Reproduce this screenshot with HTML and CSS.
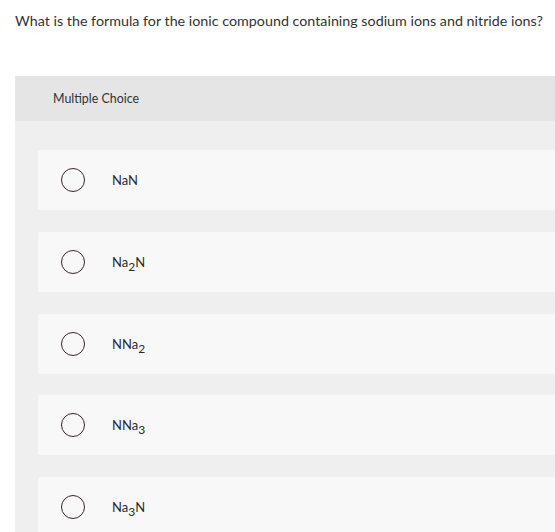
FILE: index.html
```html
<!DOCTYPE html>
<html>
<head>
<meta charset="utf-8">
<link rel="stylesheet" href="styles.css">
</head>
<body>
<div class="question">What is the formula for the ionic compound containing sodium ions and nitride ions?</div>
<div class="panel">
  <div class="panel-head">Multiple Choice</div>
  <div class="options">
    <div class="option"><span class="radio"></span><span class="label">NaN</span></div>
    <div class="option"><span class="radio"></span><span class="label">Na<sub>2</sub>N</span></div>
    <div class="option"><span class="radio"></span><span class="label">NNa<sub>2</sub></span></div>
    <div class="option"><span class="radio"></span><span class="label">NNa<sub>3</sub></span></div>
    <div class="option"><span class="radio"></span><span class="label">Na<sub>3</sub>N</span></div>
  </div>
</div>
</body>
</html>
```
FILE: styles.css
```css
html, body {
  margin: 0;
  padding: 0;
  background: #ffffff;
  font-family: Lato, "Liberation Sans", sans-serif;
  color: #333333;
  overflow: hidden;
}
.question {
  font-size: 14.3px;
  line-height: 20px;
  padding: 11px 0 0 15px;
  height: 76px;
  box-sizing: border-box;
  white-space: nowrap;
}
.panel {
  margin-left: 15px;
  background: #efefef;
}
.panel-head {
  background: #e5e5e5;
  height: 45px;
  display: flex;
  align-items: center;
  padding-left: 38px;
  font-size: 12.4px;
}
.options {
  display: flex;
  flex-direction: column;
  gap: 21.75px;
  padding: 29px 0 0 23px;
}
.option {
  background: #f8f8f8;
  height: 60px;
  flex: none;
  display: flex;
  align-items: center;
  border-radius: 2px 0 0 2px;
}
.radio {
  width: 22px;
  height: 22px;
  border: 1.5px solid #3a2230;
  border-radius: 50%;
  margin-left: 23px;
  flex: none;
}
.label {
  margin-left: 27px;
  font-size: 13px;
  color: #2a2a2a;
}
sub {
  font-size: 12px;
  vertical-align: -4px;
  line-height: 0;
}
```
